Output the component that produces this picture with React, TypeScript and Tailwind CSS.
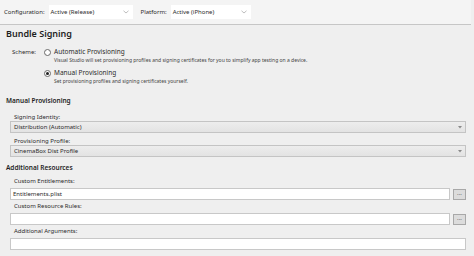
import React from "react";

const font = { fontFamily: '"Noto Sans", "Open Sans", sans-serif' };

function TopSelect({ label, value, width }: { label: string; value: string; width: string }) {
  return (
    <div className="flex items-center">
      <span className="text-[6px] text-[#2b2b2b] mr-[4px]">{label}</span>
      <div className={`flex items-center justify-between h-[14px] bg-white pl-[2px] pr-[4px] ${width}`}>
        <span className="text-[6px] text-[#2b2b2b]">{value}</span>
        <svg width="6" height="4" viewBox="0 0 6 4">
          <path d="M0.5 0.8 L3 3 L5.5 0.8" fill="none" stroke="#a0a0a0" strokeWidth="0.7" />
        </svg>
      </div>
    </div>
  );
}

function Dropdown({ label, value }: { label: string; value: string }) {
  return (
    <div className="flex flex-col">
      <span className="text-[6px] text-[#2b2b2b] pl-[4px] h-[8px] leading-[8px]">{label}</span>
      <div className="flex items-center justify-between h-[12px] border border-[#c4c4c4] bg-gradient-to-b from-[#ededed] to-[#e3e3e3] pl-[3px] pr-[3px]">
        <span className="text-[6px] text-[#2b2b2b]">{value}</span>
        <svg width="4" height="3" viewBox="0 0 4 3">
          <path d="M0 0 L4 0 L2 2.5 Z" fill="#8a8a8a" />
        </svg>
      </div>
    </div>
  );
}

function TextBox({ label, value, browse }: { label: string; value?: string; browse?: boolean }) {
  return (
    <div className="flex flex-col">
      <span className="text-[6px] text-[#2b2b2b] pl-[4px] h-[13px] leading-[13px]">{label}</span>
      <div className="flex items-center gap-[3px]">
        <div className="flex-1 flex items-center h-[12px] border border-[#c8c8c8] bg-white pl-[2px]">
          <span className="text-[6px] text-[#2b2b2b]">{value}</span>
        </div>
        {browse && (
          <div className="w-[13px] h-[11px] border border-[#a8a8a8] bg-[#dcdcdc] flex items-center justify-center">
            <span className="text-[6px] leading-none text-[#555] -mt-[2px]">...</span>
          </div>
        )}
      </div>
    </div>
  );
}

export default function App() {
  return (
    <div className="w-[474px] h-[256px] bg-[#efefef] overflow-hidden" style={font}>
      {/* Toolbar */}
      <div className="h-[25px] bg-[#f4f4f4] flex items-center gap-[8px] pl-[4px] border-b border-[#c6c6c6] mr-[3px]">
        <TopSelect label="Configuration:" value="Active (Release)" width="w-[84px]" />
        <TopSelect label="Platform:" value="Active (iPhone)" width="w-[80px]" />
      </div>

      <div className="pl-[6px] pr-[8px]">
        {/* Bundle Signing */}
        <div className="text-[9px] font-semibold text-[#1e1e1e] h-[18px] leading-[18px]">Bundle Signing</div>
        <div className="flex mt-[4px]">
          <span className="text-[6px] text-[#2b2b2b] w-[38px] pl-[6px] leading-[10px]">Scheme:</span>
          <div className="flex flex-col gap-[4px]">
            <div className="flex">
              <div className="w-[7px] h-[7px] rounded-full border border-[#6a6a6a] bg-white mt-[1.5px] mr-[3px] shrink-0" />
              <div className="flex flex-col">
                <span className="text-[6.5px] text-[#2b2b2b] leading-[10px]">Automatic Provisioning</span>
                <span className="text-[5px] text-[#444] leading-[7px]">
                  Visual Studio will set provisioning profiles and signing certificates for you to simplify app testing on a device.
                </span>
              </div>
            </div>
            <div className="flex">
              <div className="w-[7px] h-[7px] rounded-full border border-[#6a6a6a] bg-white mt-[1.5px] mr-[3px] shrink-0 flex items-center justify-center">
                <div className="w-[3px] h-[3px] rounded-full bg-[#1e1e1e]" />
              </div>
              <div className="flex flex-col">
                <span className="text-[6.5px] text-[#2b2b2b] leading-[10px]">Manual Provisioning</span>
                <span className="text-[5px] text-[#444] leading-[7px]">Set provisioning profiles and signing certificates yourself.</span>
              </div>
            </div>
          </div>
        </div>

        {/* Manual Provisioning */}
        <div className="text-[6.5px] font-semibold text-[#1e1e1e] h-[14px] leading-[14px] mt-[9px]">Manual Provisioning</div>
        <div className="pl-[4px] flex flex-col gap-[4px] mt-[5px]">
          <Dropdown label="Signing Identity:" value="Distribution (Automatic)" />
          <Dropdown label="Provisioning Profile:" value="CinemaBox Dist Profile" />
        </div>

        {/* Additional Resources */}
        <div className="text-[6.5px] font-semibold text-[#1e1e1e] h-[14px] leading-[14px] mt-[4px]">Additional Resources</div>
        <div className="pl-[4px] flex flex-col">
          <TextBox label="Custom Entitlements:" value="Entitlements.plist" browse />
          <TextBox label="Custom Resource Rules:" browse />
          <TextBox label="Additional Arguments:" />
        </div>
      </div>
    </div>
  );
}
